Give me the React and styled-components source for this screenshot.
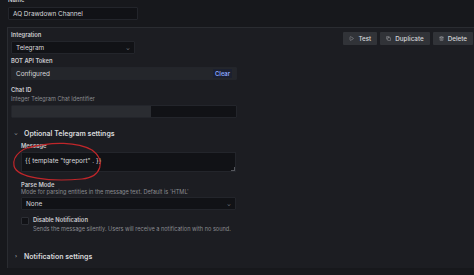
import React from "react";
import styled, { createGlobalStyle } from "styled-components";
import { Play, Copy, Trash2 } from "lucide-react";

const GlobalStyle = createGlobalStyle`
  html, body {
    margin: 0;
    padding: 0;
    background: #17181c;
    font-family: Inter, "Noto Sans", sans-serif;
    color: #d8d9dc;
    overflow: hidden;
  }
`;

const Stage = styled.div`
  position: relative;
`;

const Page = styled.div`
  width: 474px;
  height: 275px;
  padding-left: 7px;
  box-sizing: border-box;
  overflow: hidden;
`;

const Top = styled.div`
  padding-left: 1px;
  margin-top: -4px;
`;

const Label = styled.div`
  font-size: 5.8px;
  font-weight: 600;
  color: #ccccd0;
  line-height: 8px;
  margin-bottom: ${(p) => p.$mb ?? 2}px;
`;

const Desc = styled.div`
  font-size: 5.6px;
  color: #8a8b90;
  line-height: 8px;
  margin-top: ${(p) => p.$mt ?? -1}px;
  margin-bottom: ${(p) => p.$mb ?? 2}px;
`;

const Input = styled.div`
  width: ${(p) => p.$w}px;
  height: 13px;
  box-sizing: border-box;
  background: ${(p) => p.$bg || "#111216"};
  border: 1px solid #23252b;
  border-radius: 1px;
  display: flex;
  align-items: center;
  justify-content: space-between;
  padding: 0 4px;
  font-size: 6.4px;
  color: #d8d9dc;
`;

const Panel = styled.div`
  margin-top: 7px;
  height: 241px;
  box-sizing: border-box;
  border-top: 1px solid #2a2c31;
  border-left: 1px solid #2a2c31;
  background: #1c1d22;
  display: flex;
  justify-content: space-between;
  padding: 3px 1px 0 3px;
`;

const Column = styled.div`
  width: 226px;
  display: flex;
  flex-direction: column;
`;

const Field = styled.div`
  margin-top: ${(p) => p.$mt || 0}px;
  margin-bottom: ${(p) => p.$mb ?? 6}px;
  padding-left: ${(p) => p.$indent || 0}px;
`;

const Buttons = styled.div`
  display: flex;
  gap: 3px;
  align-items: flex-start;
  padding-top: 1px;
`;

const Btn = styled.div`
  height: 13px;
  box-sizing: border-box;
  padding: 0 6px;
  background: #313338;
  border-radius: 1px;
  display: flex;
  align-items: center;
  gap: 4px;
  font-size: 6.3px;
  color: #d6d7da;
  font-weight: 500;
  svg {
    width: 5px;
    height: 5px;
    color: #b8b9bd;
  }
`;

const Chevron = styled.span`
  font-size: 5px;
  color: #9a9ba0;
`;

const ClearBtn = styled.span`
  font-size: 5.8px;
  font-weight: 600;
  color: #8aa7ff;
  background: #1b2030;
  padding: 1px 2px;
`;

const Redacted = styled.div`
  width: 139px;
  height: 100%;
  background: #2a2c31;
  margin-left: -4px;
`;

const Section = styled.div`
  display: flex;
  align-items: center;
  gap: 5px;
  font-size: 7px;
  font-weight: 600;
  color: #d8d9dc;
  margin-left: 2px;
  height: 10px;
`;

const Arrow = styled.span`
  width: 6px;
  font-size: 5px;
  color: #9a9ba0;
  display: inline-flex;
  justify-content: center;
`;

const TextArea = styled.div`
  position: relative;
  width: 215px;
  height: 20px;
  box-sizing: border-box;
  background: #111216;
  border: 1px solid #23252b;
  padding: 4px 3px;
  font-size: 6.4px;
  color: #d8d9dc;
`;

const Grip = styled.span`
  position: absolute;
  right: 0;
  bottom: 0;
  width: 3px;
  height: 3px;
  border-right: 1px solid #55575d;
  border-bottom: 1px solid #55575d;
`;

const CheckRow = styled.div`
  display: flex;
  gap: 4px;
`;

const Box = styled.div`
  width: 6px;
  height: 6px;
  margin-top: 1px;
  background: #111216;
  border: 1px solid #2c2e34;
  border-radius: 1px;
`;

const Ink = styled.svg`
  position: absolute;
  left: 0;
  top: 0;
  pointer-events: none;
`;

export default function App() {
  return (
    <>
      <GlobalStyle />
      <Stage>
        <Page>
          <Top>
            <Label $mb={3}>Name *</Label>
            <Input $w={130}>AQ Drawdown Channel</Input>
          </Top>
          <Panel>
            <Column>
              <Field $mb={3}>
                <Label>Integration</Label>
                <Input $w={124}>
                  Telegram
                  <Chevron>⌄</Chevron>
                </Input>
              </Field>
              <Field>
                <Label>BOT API Token</Label>
                <Input $w={226} $bg="#24262b">
                  Configured
                  <ClearBtn>Clear</ClearBtn>
                </Input>
              </Field>
              <Field $mb={10}>
                <Label>Chat ID</Label>
                <Desc>Integer Telegram Chat Identifier</Desc>
                <Input $w={226}>
                  <Redacted />
                </Input>
              </Field>
              <Section>
                <Arrow>⌄</Arrow>
                Optional Telegram settings
              </Section>
              <Field $indent={10} $mb={9} $mt={4}>
                <Label>Message</Label>
                <TextArea>
                  {'{{ template "tgreport" . }}'}
                  <Grip />
                </TextArea>
              </Field>
              <Field $indent={10} $mb={6}>
                <Label $mb={0}>Parse Mode</Label>
                <Desc $mb={1}>Mode for parsing entities in the message text. Default is 'HTML'</Desc>
                <Input $w={215}>
                  None
                  <Chevron>⌄</Chevron>
                </Input>
              </Field>
              <Field $indent={10} $mb={16}>
                <CheckRow>
                  <Box />
                  <div>
                    <Label $mb={0}>Disable Notification</Label>
                    <Desc $mt={1}>Sends the message silently. Users will receive a notification with no sound.</Desc>
                  </div>
                </CheckRow>
              </Field>
              <Section>
                <Arrow>›</Arrow>
                Notification settings
              </Section>
            </Column>
            <Buttons>
              <Btn>
                <Play />Test
              </Btn>
              <Btn>
                <Copy />Duplicate
              </Btn>
              <Btn>
                <Trash2 />Delete
              </Btn>
            </Buttons>
          </Panel>
        </Page>
        <Ink width="474" height="275">
          <path
            d="M42 145 C22 146 12 156 14 166 C17 178 50 182 82 179 C102 177 106 160 92 150 C78 142 52 141 28 148"
            fill="none"
            stroke="#c0262a"
            strokeWidth="1.2"
          />
        </Ink>
      </Stage>
    </>
  );
}
